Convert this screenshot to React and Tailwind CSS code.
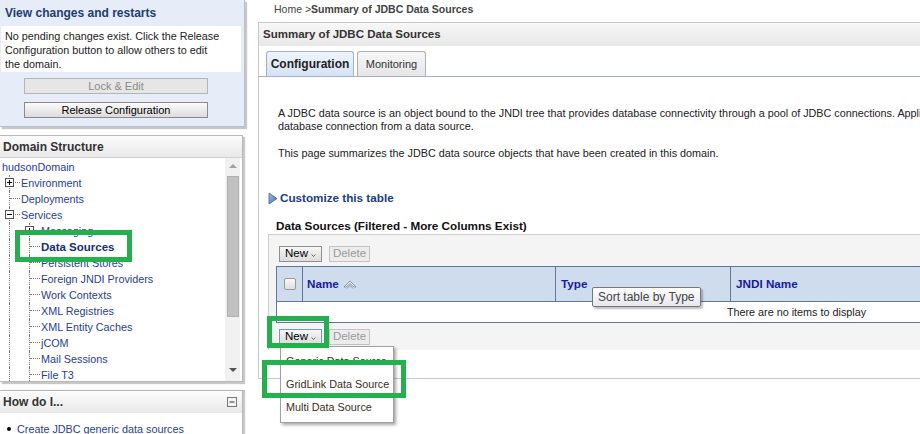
import React from 'react';

const font = { fontFamily: '"Liberation Sans", Arial, sans-serif' };

const PlusBox = ({ minus }) => (
  <svg width="9" height="9" viewBox="0 0 9 9" className="absolute bg-white" style={{ left: -5, top: 3 }}>
    <rect x="0.5" y="0.5" width="8" height="8" fill="#fff" stroke="#555" />
    <line x1="2" y1="4.5" x2="7" y2="4.5" stroke="#000" />
    {!minus && <line x1="4.5" y1="2" x2="4.5" y2="7" stroke="#000" />}
  </svg>
);

const Guide = ({ branch, box }) => (
  <div className="flex w-5 h-4 shrink-0">
    <div className="w-[9px]" />
    <div className="relative w-[11px] h-full border-l border-dotted border-[#777]">
      {branch && <div className="h-[8px] w-[10px] border-b border-dotted border-[#777]" />}
      {box && <PlusBox minus={box === 'minus'} />}
    </div>
  </div>
);

const treeRows = [
  { label: 'Environment', level: 1, box: 'plus' },
  { label: 'Deployments', level: 1 },
  { label: 'Services', level: 1, box: 'minus' },
  { label: 'Messaging', level: 2, box: 'plus' },
  { label: 'Data Sources', level: 2, bold: true },
  { label: 'Persistent Stores', level: 2 },
  { label: 'Foreign JNDI Providers', level: 2 },
  { label: 'Work Contexts', level: 2 },
  { label: 'XML Registries', level: 2 },
  { label: 'XML Entity Caches', level: 2 },
  { label: 'jCOM', level: 2 },
  { label: 'Mail Sessions', level: 2 },
  { label: 'File T3', level: 2 },
];

const SortIcon = () => (
  <svg width="14" height="10" viewBox="0 0 14 10" className="ml-1">
    <path d="M1 8 L7 2 L13 8 L11 8 L7 4.5 L3 8 Z" fill="#fff" stroke="#7a8aa8" strokeWidth="0.9" strokeLinejoin="round" />
    <path d="M4 9.5 L7 6.5 L10 9.5" fill="none" stroke="#7a8aa8" strokeWidth="0.9" />
  </svg>
);

const Chevron = () => (
  <svg width="8" height="5" viewBox="0 0 8 5" className="ml-[3px] mt-[2px]">
    <path d="M1 1 L4 4 L7 1" fill="none" stroke="#222" strokeWidth="1.1" />
  </svg>
);

const ButtonRow = ({ focused }) => (
  <div className="flex gap-[7px] h-4">
    <div
      className={`flex items-center px-[5px] w-[43px] h-4 text-[11.5px] text-black border bg-gradient-to-b from-[#f6f6f6] to-[#dcdcdc] ${
        focused ? 'border-[#6f98cc]' : 'border-[#8f8f8f]'
      }`}
    >
      New
      <Chevron />
    </div>
    <div className="flex items-center justify-center w-[41px] h-4 text-[11.5px] text-[#9a9a9a] border border-[#c4c4c4] bg-[#ececec]">
      Delete
    </div>
  </div>
);

export default function App() {
  return (
    <div className="relative w-[920px] h-[434px] overflow-hidden bg-white flex text-[#222]" style={font}>
      {/* left column */}
      <div className="w-[248px] shrink-0 flex flex-col">
        <div className="shrink-0 w-[245px] h-[127px] bg-[#e6ecf8] border-r border-b border-[#b5bfd0] shadow-[2px_2px_1px_#c8c8c8]">
          <div className="pl-[5px] pt-[5px] h-[26px] text-[12px] leading-[16px] font-bold text-[#1c3d73]">View changes and restarts</div>
          <div className="bg-white ml-px mr-[3px] px-[4px] pt-[3px] text-[10.8px] leading-[14px] text-[#222] h-[46px] whitespace-nowrap">
            No pending changes exist. Click the Release
            <br />
            Configuration button to allow others to edit
            <br />
            the domain.
          </div>
          <div className="flex flex-col items-start pl-[24px] pt-[6px] gap-[8px]">
            <div className="w-[184px] h-[16px] flex items-center justify-center text-[11px] text-[#8a8a8a] bg-[#e6e6e6] border border-[#b5b5b5]">
              Lock &amp; Edit
            </div>
            <div className="w-[184px] h-[16px] flex items-center justify-center text-[11px] text-black bg-gradient-to-b from-[#fbfbfb] to-[#dcdcdc] border border-[#8a8a8a]">
              Release Configuration
            </div>
          </div>
        </div>

        <div className="shrink-0 mt-[8px] w-[243px] h-[247px] border-r border-b border-t border-[#b8b8b8] shadow-[2px_2px_1px_#c8c8c8] flex flex-col">
          <div className="h-[22px] bg-gradient-to-b from-[#fbfbfb] to-[#e9e9e9] border-b border-[#d0d0d0] pl-[3px] flex items-center text-[12px] font-bold text-[#333]">
            Domain Structure
          </div>
          <div className="flex flex-1 min-h-0">
            <div className="flex-1 overflow-hidden pt-[1px] text-[10.8px] text-[#1f409e]">
              <div className="h-4 pl-[2px] leading-4">hudsonDomain</div>
              {treeRows.map((r) => (
                <div key={r.label} className="flex h-4 leading-4 whitespace-nowrap">
                  {r.level === 1 ? (
                    <Guide branch box={r.box} />
                  ) : (
                    <>
                      <Guide />
                      <Guide branch box={r.box} />
                    </>
                  )}
                  <span className={r.bold ? 'font-bold text-[11.5px] text-[#13307a] pl-px' : 'pl-px'}>{r.label}</span>
                </div>
              ))}
            </div>
            <div className="w-[15px] mr-[2px] bg-[#f1f1f1] flex flex-col items-center">
              <div className="h-[15px] flex items-center justify-center">
                <div className="w-0 h-0 border-l-[4px] border-r-[4px] border-b-[4px] border-l-transparent border-r-transparent border-b-[#a0a0a0]" />
              </div>
              <div className="w-[12px] h-[141px] mt-[3px] bg-[#c1c1c1] border border-[#b0b0b0]" />
              <div className="flex-1" />
              <div className="h-[15px] mb-[4px] flex items-center justify-center">
                <div className="w-0 h-0 border-l-[4px] border-r-[4px] border-t-[4px] border-l-transparent border-r-transparent border-t-[#555]" />
              </div>
            </div>
          </div>
        </div>

        <div className="shrink-0 mt-[8px] w-[243px] h-[60px] border-r border-t border-[#b8b8b8] shadow-[2px_0_1px_#c8c8c8]">
          <div className="h-[22px] bg-gradient-to-b from-[#fbfbfb] to-[#e9e9e9] pl-[3px] pr-[5px] flex items-center justify-between text-[12px] font-bold text-[#333]">
            How do I...
            <svg width="10" height="10" viewBox="0 0 10 10">
              <rect x="0.5" y="0.5" width="9" height="9" fill="#f4f4f4" stroke="#777" />
              <line x1="2.5" y1="5" x2="7.5" y2="5" stroke="#333" />
            </svg>
          </div>
          <div className="flex items-center pl-[7px] pt-[9px] text-[10.8px] leading-[14px] text-[#1f409e]">
            <span className="w-[4px] h-[4px] rounded-full bg-black mr-[6px]" />
            Create JDBC generic data sources
          </div>
        </div>
      </div>

      {/* right column */}
      <div className="flex-1 min-w-0 pl-[10px] flex flex-col">
        <div className="shrink-0 h-[22px] pl-[16px] pt-[2px] text-[10.5px] leading-[14px] text-[#444]">
          Home &gt;<span className="font-bold">Summary of JDBC Data Sources</span>
        </div>
        <div className="shrink-0 w-[700px] h-[357px] border-l border-b border-t border-[#c8c8c8] flex flex-col">
          <div className="shrink-0 h-[23px] bg-gradient-to-b from-[#f7f7f7] to-[#e8e8e8] pl-[4px] flex items-center text-[11.5px] font-bold text-[#333]">
            Summary of JDBC Data Sources
          </div>
          <div className="shrink-0 flex items-end gap-[3px] pl-[7px] h-[31px] border-b border-[#9db2d2]">
            <div className="h-[25px] w-[88px] flex items-center justify-center rounded-t-[3px] border border-b-0 border-[#9db2d2] bg-gradient-to-b from-[#eef4fb] to-[#d6e3f3] text-[12px] font-bold text-[#222]">
              Configuration
            </div>
            <div className="h-[25px] w-[69px] flex items-center justify-center rounded-t-[3px] border border-b-0 border-[#b0b0b0] bg-gradient-to-b from-[#f7f7f7] to-[#e6e6e6] text-[11px] text-[#333]">
              Monitoring
            </div>
          </div>
          <div className="shrink-0 pl-[19px] pt-[30px] text-[10.8px] leading-[13px] text-[#222] whitespace-nowrap">
            <div>A JDBC data source is an object bound to the JNDI tree that provides database connectivity through a pool of JDBC connections. Applications can look up a data source on the JNDI tree and then borrow a</div>
            <div>database connection from a data source.</div>
            <div className="mt-[14px]">This page summarizes the JDBC data source objects that have been created in this domain.</div>
          </div>
          <div className="shrink-0 flex items-center pl-[9px] mt-[31px] h-[14px]">
            <svg width="10" height="13" viewBox="0 0 10 13">
              <defs>
                <linearGradient id="tri" x1="0" y1="0" x2="1" y2="1">
                  <stop offset="0" stopColor="#a9c4ea" />
                  <stop offset="1" stopColor="#3d66b0" />
                </linearGradient>
              </defs>
              <path d="M1 1 L9 6.5 L1 12 Z" fill="url(#tri)" stroke="#3d5f9e" strokeWidth="0.8" strokeLinejoin="round" />
            </svg>
            <span className="ml-[2px] text-[11.7px] font-bold text-[#1c3d84]">Customize this table</span>
          </div>
          <div className="shrink-0 pl-[17px] mt-[13px] h-[16px] leading-[16px] text-[11.7px] font-bold text-[#111]">
            Data Sources (Filtered - More Columns Exist)
          </div>
          <div className="shrink-0 ml-[9px] h-[116px] bg-[#f4f4f4] border-t border-l border-[#cfcfcf] pl-[10px] pt-[11px]">
            <ButtonRow />
            <div className="mt-[4px] -ml-[3px] w-[1040px] border-l border-t border-b border-[#5f7898]">
              <div className="flex h-[35px] bg-[#cfdcee] border-b border-[#5f7898] text-[11.7px] font-bold text-[#1a1aa0]">
                <div className="w-[26px] flex items-center justify-center border-r border-[#5f7898]">
                  <div className="w-[12px] h-[12px] rounded-[2px] border border-[#9a9a9a] bg-gradient-to-b from-[#fafafa] to-[#dedede]" />
                </div>
                <div className="w-[253px] flex items-center pl-[4px] border-r border-[#5f7898]">
                  Name
                  <SortIcon />
                </div>
                <div className="w-[175px] flex items-center pl-[5px] border-r border-[#5f7898]">Type</div>
                <div className="flex-1 flex items-center pl-[5px]">JNDI Name</div>
              </div>
              <div className="h-[20px] bg-white flex items-center justify-center text-[10.8px] text-[#222]">
                There are no items to display
              </div>
            </div>
            <div className="mt-[6px]">
              <ButtonRow focused />
            </div>
          </div>
        </div>
      </div>

      {/* tooltip */}
      <div className="absolute left-[592px] top-[287px] h-[20px] px-[5px] flex items-center text-[12px] text-[#444] bg-gradient-to-b from-[#ffffff] to-[#e6e6ee] border border-[#777] rounded-[2px] shadow-[2px_2px_2px_rgba(0,0,0,0.25)]">
        Sort table by Type
      </div>

      {/* new menu */}
      <div className="absolute left-[280px] top-[346px] w-[114px] h-[77px] bg-white border border-[#a0a0a0] shadow-[2px_2px_3px_rgba(0,0,0,0.35)] flex flex-col pl-[5px] pt-[6px] text-[10.8px] text-[#3b3020] whitespace-nowrap">
        <div className="h-[23px] leading-[16px]">Generic Data Source</div>
        <div className="h-[23px] leading-[16px]">GridLink Data Source</div>
        <div className="h-[23px] leading-[16px]">Multi Data Source</div>
      </div>

      {/* green annotations */}
      <div className="absolute left-[15px] top-[230px] w-[117px] h-[32px] border-[5px] border-[#22b14c]" />
      <div className="absolute left-[267px] top-[316px] w-[62px] h-[32px] border-[5px] border-[#22b14c]" />
      <div className="absolute left-[262px] top-[360px] w-[144px] h-[38px] border-[5px] border-[#22b14c]" />
    </div>
  );
}
